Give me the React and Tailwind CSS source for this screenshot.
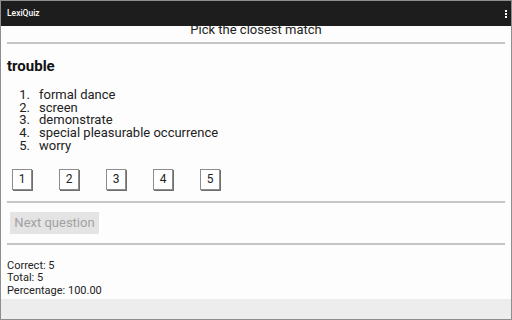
const choices = [
  "formal dance",
  "screen",
  "demonstrate",
  "special pleasurable occurrence",
  "worry",
];

const Rule = ({ className = "" }) => (
  <div className={`h-[2px] bg-[#c6c6c6] ${className}`} />
);

const App = () => {
  return (
    <div
      className="w-[512px] h-[320px] flex flex-col border border-[#8e8e8e] bg-[#fdfdfd] overflow-hidden"
      style={{ fontFamily: "Roboto, 'Liberation Sans', sans-serif" }}
    >
      {/* action bar */}
      <div className="h-[25px] shrink-0 bg-[#1d1d1d] flex items-center justify-between pl-[6px] pr-[4px] relative z-10">
        <span className="text-white text-[8.5px] font-medium">LexiQuiz</span>
        <div className="flex flex-col gap-[1px]">
          <span className="w-[2px] h-[2px] bg-white" />
          <span className="w-[2px] h-[2px] bg-white" />
          <span className="w-[2px] h-[2px] bg-white" />
        </div>
      </div>

      {/* scrolled content */}
      <div className="flex-1 overflow-hidden px-[6px]">
        <div className="-mt-[4px] text-center text-[13px] leading-[15px] text-[#222]">
          Pick the closest match
        </div>
        <Rule className="mt-[5px]" />

        <h2 className="mt-[13px] text-[15px] leading-[18px] font-bold text-[#111]">
          trouble
        </h2>

        <ol className="mt-[14px] text-[13px] leading-[12.7px] text-[#222]">
          {choices.map((c, i) => (
            <li key={c} className="flex">
              <span className="w-[24px] text-right pr-[1px]">{i + 1}.</span>
              <span className="pl-[8px]">{c}</span>
            </li>
          ))}
        </ol>

        <div className="mt-[16px] ml-[5px] flex gap-[27px]">
          {[1, 2, 3, 4, 5].map((n) => (
            <button
              key={n}
              className="w-[20px] h-[21px] bg-white border border-[#8c8c8c] shadow-[1px_1px_0_#6f6f6f] flex items-center justify-center text-[12px] text-[#222]"
            >
              {n}
            </button>
          ))}
        </div>

        <Rule className="mt-[11px]" />

        <button className="mt-[9px] ml-[3px] w-[89px] h-[22px] bg-[#e4e4e4] text-[13px] text-[#a2a2a2] flex items-center justify-center">
          Next question
        </button>

        <Rule className="mt-[9px]" />

        <div className="mt-[15px] text-[11px] leading-[12.5px] text-[#222]">
          <p>Correct: 5</p>
          <p>Total: 5</p>
          <p>Percentage: 100.00</p>
        </div>
      </div>

      {/* bottom band */}
      <div className="h-[20px] shrink-0 bg-[#ededed]" />
    </div>
  );
};

export default App;
